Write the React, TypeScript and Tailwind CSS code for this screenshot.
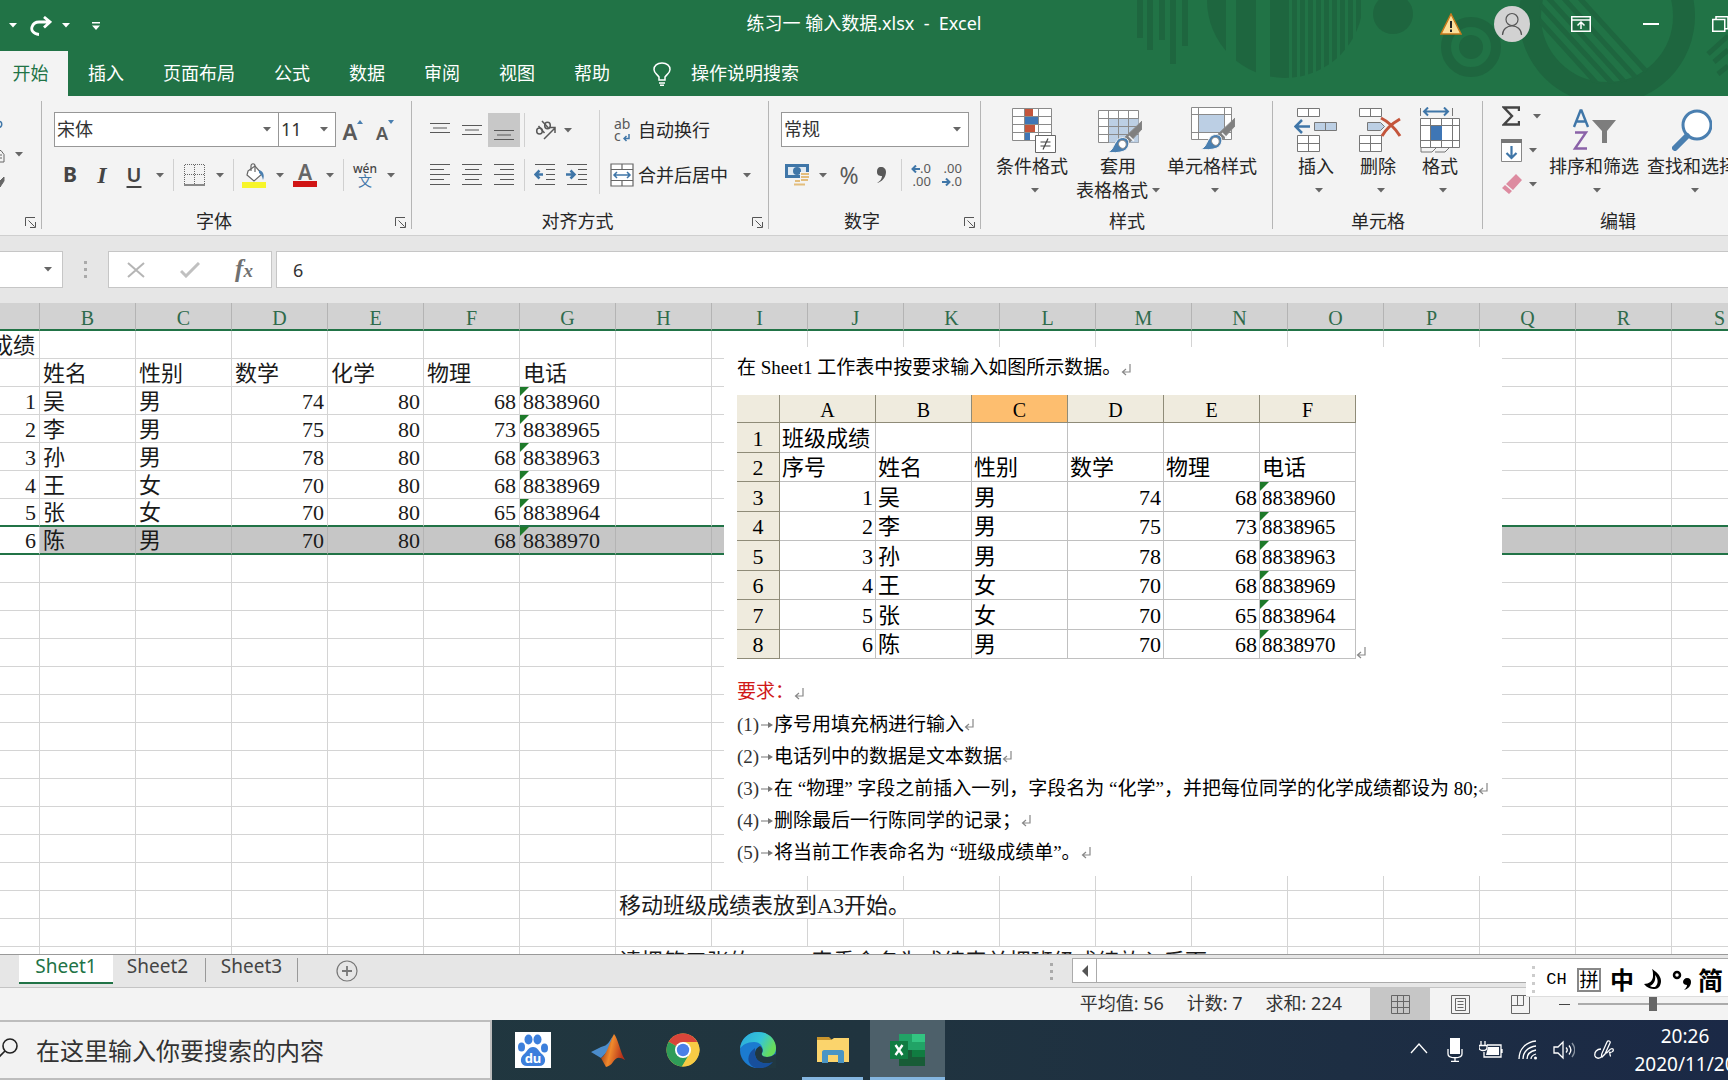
import type { ReactNode } from 'react'

const letters = ['B', 'C', 'D', 'E', 'F', 'G', 'H', 'I', 'J', 'K', 'L', 'M', 'N', 'O', 'P', 'Q', 'R', 'S']
const tabs = ['插入', '页面布局', '公式', '数据', '审阅', '视图', '帮助']

interface Student {
  no: number
  name: string
  sex: string
  math: number
  chem: number
  phys: number
  phone: string
}

const students: Student[] = [
  { no: 1, name: '吴', sex: '男', math: 74, chem: 80, phys: 68, phone: '8838960' },
  { no: 2, name: '李', sex: '男', math: 75, chem: 80, phys: 73, phone: '8838965' },
  { no: 3, name: '孙', sex: '男', math: 78, chem: 80, phys: 68, phone: '8838963' },
  { no: 4, name: '王', sex: '女', math: 70, chem: 80, phys: 68, phone: '8838969' },
  { no: 5, name: '张', sex: '女', math: 70, chem: 80, phys: 65, phone: '8838964' },
  { no: 6, name: '陈', sex: '男', math: 70, chem: 80, phys: 68, phone: '8838970' },
]

const tasks = [
  '序号用填充柄进行输入',
  '电话列中的数据是文本数据',
  '在 “物理” 字段之前插入一列，字段名为 “化学”，并把每位同学的化学成绩都设为 80;',
  '删除最后一行陈同学的记录；',
  '将当前工作表命名为 “班级成绩单”。',
]

/* ---------- small helpers ---------- */

function Caret({ light }: { light?: boolean }) {
  return (
    <svg viewBox="0 0 8 5" className={`h-[5px] w-2 shrink-0 ${light ? 'fill-white' : 'fill-[#666]'}`}>
      <path d="M0 0h8L4 4.5z" />
    </svg>
  )
}

function Btn({ w, label, children, className = '' }: { w: string; label: string; children: ReactNode; className?: string }) {
  return (
    <button aria-label={label} className={`flex h-full shrink-0 items-center justify-center ${w} ${className}`}>
      {children}
    </button>
  )
}

function Sep() {
  return (
    <div className="flex h-full w-2 shrink-0 justify-center">
      <div className="w-px bg-[#d0d0d0]" />
    </div>
  )
}

function Launcher() {
  return (
    <button aria-label="更多设置" className="absolute right-[6px] bottom-[7px] h-[11px] w-[11px]">
      <svg viewBox="0 0 11 11" className="h-[11px] w-[11px]" fill="none" stroke="#555">
        <path d="M.5 9V.5H10M3.5 3.5l6 6M10.5 5v5.500H5" />
      </svg>
    </button>
  )
}

function Group({ w, label, children, launcher }: { w: string; label: string; children?: ReactNode; launcher?: boolean }) {
  return (
    <section className={`relative flex shrink-0 flex-col ${w}`}>
      <div className="h-[112px]">{children}</div>
      <div className={`h-[26px] text-center leading-[26px] ${launcher ? 'pr-[26px]' : ''}`}>{label}</div>
      {launcher && <Launcher />}
      <div className="absolute top-[5px] right-0 h-[128px] w-px bg-[#b5b5b5]" />
    </section>
  )
}

function Combo({ w, label, value }: { w: string; label: string; value: string }) {
  return (
    <div className={`relative h-[35px] shrink-0 ${w}`}>
      <select
        aria-label={label}
        className="h-full w-full appearance-none border border-[#979797] bg-white pl-[2px] text-[18px] text-[#333] outline-none"
      >
        <option>{value}</option>
      </select>
      <div className="pointer-events-none absolute top-[15px] right-2">
        <Caret />
      </div>
    </div>
  )
}

function Lines({ d }: { d: string }) {
  return (
    <svg viewBox="0 0 22 24" className="h-6 w-[22px]" fill="none" stroke="#595959" strokeWidth="1.2">
      <path d={d} />
    </svg>
  )
}

function BigBtn({ w, icon, label, second }: { w: string; icon: ReactNode; label: string; second?: string }) {
  return (
    <button className={`flex shrink-0 flex-col items-center pt-[9px] whitespace-nowrap ${w}`}>
      <span className="flex h-[49px] items-center">{icon}</span>
      <span className="leading-[25px]">{label}</span>
      <span className={`flex h-[22px] items-center gap-1 leading-[22px] ${second ? '' : 'pl-[6px]'}`}>
        {second}
        <Caret />
      </span>
    </button>
  )
}

function Brush() {
  return (
    <>
      <path d="M44 12v8L30 35l-5-5z" fill="#808080" />
      <path d="M31 27l5 5" stroke="#f3f3f3" strokeWidth="1.500" />
      <path d="M18 33c2-5 9-6 12-2 2 4 0 9-4 11-5 2-12 2-16 1 5-2 5-6 8-10z" fill="#4a7fb0" stroke="#f3f3f3" strokeWidth="1" />
      <path d="M22 32c4-2 7 1 6 5-2 3-4 3-6 1-2-2-2-4 0-6z" fill="#fff" />
    </>
  )
}

/* ---------- title bar ---------- */

function HeaderPattern() {
  const thin = [162, 170, 178, 186, 194, 202, 210, 218, 226]
  return (
    <svg viewBox="0 0 598 96" className="absolute top-0 right-0 h-24 w-[598px]" fill="#1e663f">
      <defs>
        <clipPath id="disc">
          <circle cx="155" cy="0" r="78" />
        </clipPath>
        <clipPath id="ring">
          <circle cx="477" cy="16" r="68" />
        </clipPath>
      </defs>
      <path d="M7 0h6v38H7zM17 0h6v50h-6zM29 0h6v40h-6zM40 0h6v64h-6zM52 0h6v46h-6z" />
      <g clipPath="url(#disc)">
        <path d="M77 0h19v90H77zM106 0h20v90h-20zM140 0h19v90h-19z" />
        {thin.map((x) => (
          <rect key={x} x={x} y="0" width="5" height="90" />
        ))}
      </g>
      <circle cx="263" cy="14" r="20" />
      <circle cx="341" cy="47" r="25" fill="none" stroke="#1e663f" strokeWidth="10" />
      <circle cx="341" cy="47" r="12" />
      <circle cx="477" cy="16" r="77" fill="none" stroke="#1e663f" strokeWidth="22" />
      <g clipPath="url(#ring)" stroke="#1e663f" strokeWidth="5">
        <path d="M400 10l100 110M400-6l110 120M400-22l120 132M408-30l120 132M424-30l110 121" />
      </g>
      <path d="M598 36l-20 18M598 50l-14 12M598 66l-10 8" stroke="#1e663f" strokeWidth="5" />
    </svg>
  )
}

function TitleBar() {
  return (
    <div className="relative grid h-[51px] grid-cols-[1fr_auto_1fr] text-white">
      <div className="flex h-[51px] items-center">
        <Btn w="w-[25px]" label="撤消列表">
          <Caret light />
        </Btn>
        <Btn w="w-[32px]" label="恢复">
          <svg viewBox="0 0 22 20" className="h-5 w-[22px]" fill="none" stroke="#fff" strokeWidth="2.800">
            <path d="M9 18.500C3 18 1 14 2 11c1-3 4-5 7-5h10M14 1l6 5-6 5.500" />
          </svg>
        </Btn>
        <Btn w="w-[17px]" label="恢复列表">
          <Caret light />
        </Btn>
        <Btn w="w-[43px]" label="自定义快速访问工具栏">
          <svg viewBox="0 0 8 8" className="h-2 w-2 fill-white">
            <path d="M0 0h8v1.500H0zM0 3.500h8L4 8z" />
          </svg>
        </Btn>
      </div>
      <h1 className="pt-[3px] leading-10 whitespace-pre">练习一 输入数据.xlsx  -  Excel</h1>
      <div className="-mr-[28px] flex h-[47px] items-center justify-end">
        <Btn w="w-[54px]" label="警告">
          <svg viewBox="0 0 22 22" className="h-[22px] w-[22px]">
            <path d="M11 1l10 20H1z" fill="#fbdf9a" stroke="#c77a1c" strokeWidth="1.500" />
            <path d="M11 8v7M11 16.500v2.500" stroke="#222" strokeWidth="2" />
          </svg>
        </Btn>
        <Btn w="w-[68px]" label="帐户">
          <svg viewBox="0 0 36 36" className="h-9 w-9" fill="none" stroke="#555" strokeWidth="1.200">
            <circle cx="18" cy="18" r="18" fill="#d2d2d2" stroke="none" />
            <circle cx="18" cy="13.500" r="6" />
            <path d="M8.500 29c0-12 19-12 19 0" />
          </svg>
        </Btn>
        <Btn w="w-[70px]" label="功能区显示选项">
          <svg viewBox="0 0 20 16" className="h-4 w-5" fill="none" stroke="#fff" strokeWidth="1.500">
            <path d="M.75.75h18.500v14.500H.75zM1 4h18M10 13V6.500M6.500 9.500L10 6l3.500 3.500" />
          </svg>
        </Btn>
        <Btn w="w-[70px]" label="最小化">
          <span className="h-[2px] w-4 bg-white" />
        </Btn>
        <Btn w="w-[70px]" label="还原">
          <svg viewBox="0 0 18 16" className="h-4 w-[18px]" fill="none" stroke="#fff" strokeWidth="1.500">
            <path d="M.75 3.500h12v11.750h-12zM4 3V.75h12v12h-3" />
          </svg>
        </Btn>
      </div>
    </div>
  )
}

function TabBar() {
  return (
    <div className="relative flex h-[45px] items-stretch text-white">
      <button className="w-[68px] bg-[#f3f3f3] pr-[7px] text-[#217346]">开始</button>
      <nav className="flex gap-[39px] pl-5">
        {tabs.map((t) => (
          <button key={t}>{t}</button>
        ))}
      </nav>
      <label className="flex items-center gap-5 pl-[43px]">
        <svg viewBox="0 0 18 24" className="h-6 w-[18px]" fill="none" stroke="#fff" strokeWidth="1.500">
          <path d="M6 18v-3C4 12 1 11 1 7.500 1 4 4 1 9 1s8 3 8 6.500c0 3.500-3 4.500-5 7.500v3zM6 21h6M7 23.250h4" />
        </svg>
        <input className="w-[140px] bg-transparent outline-none placeholder:text-white" placeholder="操作说明搜索" />
      </label>
    </div>
  )
}

/* ---------- ribbon ---------- */

function FontGroup() {
  return (
    <Group w="w-[370px]" label="字体" launcher>
      <div className="flex h-[51px] pt-4 pl-3">
        <Combo w="w-[225px]" label="字体" value="宋体" />
        <Combo w="-ml-px w-[58px]" label="字号" value="11" />
        <Btn w="w-[34px]" label="增大字号">
          <span className="pt-1 text-[22px] font-semibold text-[#595959]">A</span>
          <svg viewBox="0 0 6 4" className="mb-4 h-1 w-[6px] fill-[#4a7fb0]">
            <path d="M0 4l3-4 3 4z" />
          </svg>
        </Btn>
        <Btn w="w-[30px]" label="减小字号">
          <span className="pt-2 text-[18px] font-semibold text-[#595959]">A</span>
          <svg viewBox="0 0 6 4" className="mb-4 h-1 w-[6px] fill-[#4a7fb0]">
            <path d="M0 0l3 4 3-4z" />
          </svg>
        </Btn>
      </div>
      <div className="mt-3 flex h-8 pl-3 text-[#444]">
        <Btn w="w-8" label="加粗">
          <b className="text-[21px]">B</b>
        </Btn>
        <Btn w="w-8" label="倾斜">
          <i className="font-['Liberation_Serif',serif] text-[24px] font-bold">I</i>
        </Btn>
        <Btn w="w-8" label="下划线">
          <span className="text-[20px] font-semibold underline underline-offset-4">U</span>
        </Btn>
        <Btn w="w-[19px]" label="下划线列表">
          <Caret />
        </Btn>
        <Sep />
        <Btn w="w-[34px]" label="边框">
          <svg viewBox="0 0 21 22" className="h-[22px] w-[21px]" fill="none" stroke="#666">
            <path d="M.5 20V.5h20V20M10.500 1v19M1 10.500h19" strokeDasharray="1 1" />
            <path d="M0 21h21" strokeWidth="1.500" />
          </svg>
        </Btn>
        <Btn w="w-[18px]" label="边框列表">
          <Caret />
        </Btn>
        <Sep />
        <Btn w="w-[34px]" label="填充颜色">
          <svg viewBox="0 0 24 25" className="h-[25px] w-6">
            <path d="M6 8l7-5 7 8-8 7-7-6z" fill="#fff" stroke="#666" strokeWidth="1.200" />
            <path d="M9 8V3c0-3 4-3 4 0v6" fill="none" stroke="#666" strokeWidth="1.200" />
            <path d="M17 7c4 1 6 5 4 10-1-4-2-6-4-7z" fill="#4a7fb0" />
            <path d="M0 19h24v6H0z" fill="#f7f52a" />
          </svg>
        </Btn>
        <Btn w="w-[18px]" label="填充颜色列表">
          <Caret />
        </Btn>
        <Btn w="w-8" label="字体颜色">
          <span className="flex flex-col items-center">
            <span className="text-[21px] leading-[18px] font-semibold text-[#666]">A</span>
            <span className="h-[6px] w-6 bg-[#d01414]" />
          </span>
        </Btn>
        <Btn w="w-[18px]" label="字体颜色列表">
          <Caret />
        </Btn>
        <Sep />
        <Btn w="w-[36px]" label="拼音指南">
          <span className="flex flex-col items-center">
            <span className="text-[12px] leading-[11px] font-medium">wén</span>
            <span className="text-[14px] leading-[14px] text-[#3f76a8]">文</span>
          </span>
        </Btn>
        <Btn w="w-4" label="拼音列表">
          <Caret />
        </Btn>
      </div>
    </Group>
  )
}

function AlignGroup() {
  return (
    <Group w="w-[357px]" label="对齐方式" launcher>
      <div className="flex h-full">
        <div className="w-[187px] pt-[17px] pl-3">
          <div className="flex h-[34px]">
            <Btn w="w-8" label="顶端对齐">
              <Lines d="M1 5.500h20M4 10h14M1 14.500h20" />
            </Btn>
            <Btn w="w-8" label="垂直居中">
              <Lines d="M1 7.500h20M4 12h14M1 16.500h20" />
            </Btn>
            <Btn w="w-8" label="底端对齐" className="bg-[#c8c8c8]">
              <Lines d="M1 12.500h20M4 17h14M1 21.500h20" />
            </Btn>
            <Sep />
            <Btn w="w-[36px]" label="方向">
              <svg viewBox="0 0 22 22" className="h-[22px] w-[22px]" fill="none" stroke="#595959" strokeWidth="1.500">
                <ellipse cx="4.500" cy="12" rx="2.800" ry="3" />
                <path d="M3.500 7l6 7M7 2l6.500 7" />
                <ellipse cx="12.500" cy="6.500" rx="2.800" ry="3.200" />
                <path d="M9 20L20 9M20 14V8.500h-5.500" />
              </svg>
            </Btn>
            <Btn w="w-2" label="方向列表">
              <Caret />
            </Btn>
          </div>
          <div className="mt-3 flex h-8">
            <Btn w="w-8" label="左对齐">
              <Lines d="M1 1.500h20M1 6.500h14M1 11.500h20M1 16.500h14M1 21.500h20" />
            </Btn>
            <Btn w="w-8" label="居中">
              <Lines d="M1 1.500h20M4 6.500h14M1 11.500h20M4 16.500h14M1 21.500h20" />
            </Btn>
            <Btn w="w-8" label="右对齐">
              <Lines d="M1 1.500h20M7 6.500h14M1 11.500h20M7 16.500h14M1 21.500h20" />
            </Btn>
            <Sep />
            <Btn w="w-[34px]" label="减少缩进量">
              <svg viewBox="0 0 22 24" className="h-6 w-[22px]" fill="none" stroke="#595959" strokeWidth="1.200">
                <path d="M1 1.500h20M12 6.500h9M12 11.500h9M12 16.500h9M1 21.500h20" />
                <path d="M9 11.500H2M5.500 7.500l-4 4 4 4" stroke="#3f76a8" strokeWidth="2.500" />
              </svg>
            </Btn>
            <Btn w="w-[30px]" label="增加缩进量">
              <svg viewBox="0 0 22 24" className="h-6 w-[22px]" fill="none" stroke="#595959" strokeWidth="1.200">
                <path d="M1 1.500h20M12 6.500h9M12 11.500h9M12 16.500h9M1 21.500h20" />
                <path d="M0 11.500h8M4.500 7.500l4 4-4 4" stroke="#3f76a8" strokeWidth="2.500" />
              </svg>
            </Btn>
          </div>
        </div>
        <div className="mt-[14px] h-[84px] w-px bg-[#d0d0d0]" />
        <div className="pt-[17px] pl-[10px]">
          <button className="flex h-[34px] items-center gap-1">
            <span className="flex w-6 flex-col pl-1 text-left text-[14px] leading-[12px] text-[#595959]">
              <span>ab</span>
              <span className="flex items-center gap-[2px]">
                c
                <svg viewBox="0 0 7 8" className="mt-1 h-2 w-[7px]" fill="none" stroke="#3f76a8" strokeWidth="1.500">
                  <path d="M6 0v4.500H1M3.500 2L1 4.500 3.500 7" />
                </svg>
              </span>
            </span>
            自动换行
          </button>
          <div className="mt-3 flex h-8 items-center">
            <button className="flex items-center gap-1">
              <svg viewBox="0 0 24 24" className="h-6 w-6" fill="none" stroke="#666">
                <path d="M1 1h22v22H1zM1 6.500h22M1 17.500h22M12 1v5M12 18v5" fill="#fff" strokeWidth="1.200" />
                <path d="M4 12h16M7 9l-3 3 3 3M17 9l3 3-3 3" stroke="#3f76a8" strokeWidth="1.500" />
              </svg>
              合并后居中
            </button>
            <Btn w="w-[38px]" label="合并列表">
              <Caret />
            </Btn>
          </div>
        </div>
      </div>
    </Group>
  )
}

function NumberGroup() {
  return (
    <Group w="w-[212px]" label="数字" launcher>
      <div className="pt-4 pl-3">
        <Combo w="w-[188px]" label="数字格式" value="常规" />
        <div className="mt-3 flex h-8 text-[#595959]">
          <Btn w="w-8" label="会计数字格式">
            <svg viewBox="0 0 24 24" className="h-6 w-6">
              <path d="M0 1h24v14H0z" fill="#3f76a8" />
              <path d="M3 4h18v8H3z" fill="#dfe9f2" />
              <circle cx="12" cy="8" r="4" fill="#3f76a8" />
              <path d="M15 9h9v14H9v-7h6z" fill="#f3f3f3" />
              <path d="M16 11h8M16 14h8M16 17h7M10 18h5M9 21.500h11" stroke="#e3bd7c" strokeWidth="2" />
            </svg>
          </Btn>
          <Btn w="w-5" label="会计格式列表">
            <Caret />
          </Btn>
          <Btn w="w-8" label="百分比样式">
            <span className="text-[23px]">%</span>
          </Btn>
          <Btn w="w-8" label="千位分隔样式">
            <svg viewBox="0 0 10 16" className="h-4 w-[10px] fill-[#595959]">
              <path d="M5 0c3 0 5 2 5 5 0 5-4 10-9 11 3-2 5-4 5-7-3 0-5-1-5-4s1-5 4-5z" />
            </svg>
          </Btn>
          <Sep />
          <Btn w="w-8" label="增加小数位数">
            <span className="flex flex-col items-end text-[13px] leading-[13px]">
              <span className="flex items-center">
                <DecimalArrow d="M9 4H2M5 .5L1.500 4 5 7.500" />
                .0
              </span>
              <span>.00</span>
            </span>
          </Btn>
          <Btn w="w-[30px]" label="减少小数位数">
            <span className="flex flex-col items-end text-[13px] leading-[13px]">
              <span>.00</span>
              <span className="flex items-center">
                <DecimalArrow d="M0 4h7M4 .5L7.500 4 4 7.500" />
                .0
              </span>
            </span>
          </Btn>
        </div>
      </div>
    </Group>
  )
}

function DecimalArrow({ d }: { d: string }) {
  return (
    <svg viewBox="0 0 9 8" className="h-2 w-[9px]" fill="none" stroke="#3f76a8" strokeWidth="2">
      <path d={d} />
    </svg>
  )
}

function StylesGroup() {
  return (
    <Group w="w-[292px]" label="样式">
      <div className="flex h-full pl-[9px]">
        <BigBtn
          w="w-[84px]"
          label="条件格式"
          icon={
            <svg viewBox="0 0 44 46" className="ml-1 h-[46px] w-11" fill="none" stroke="#8a8a8a">
              <path d="M.5 1.500h39v32H.5z" fill="#fff" />
              <path d="M.5 9.500h39M.5 17.500h39M.5 25.500h39M12.500 1.500v32M26.500 1.500v32" />
              <path d="M13 2h8v7h-8zM13 18h10v7H13z" fill="#c4553b" stroke="none" />
              <path d="M13 10h13v7H13zM13 26h5v7h-5z" fill="#3f76b5" stroke="none" />
              <path d="M23.500 28.500h20v17h-20z" fill="#fff" stroke="#666" />
              <path d="M28.500 35h10M28.500 39h10M36 31.500l-5 11" stroke="#444" strokeWidth="1.200" />
            </svg>
          }
        />
        <BigBtn
          w="w-[88px]"
          label="套用"
          second="表格格式"
          icon={
            <svg viewBox="0 0 44 44" className="ml-1 mt-[3px] h-11 w-11" fill="none" stroke="#8a8a8a">
              <path d="M.5 1.500h40v32H.5z" fill="#fff" />
              <path d="M11 9.500h29.500v24H11z" fill="#bccfe4" stroke="none" />
              <path d="M.5 9.500h40M.5 17.500h40M.5 25.500h40M10.500 1.500v32M20.500 1.500v32M30.500 1.500v32" />
              <Brush />
            </svg>
          }
        />
        <BigBtn
          w="w-[100px]"
          label="单元格样式"
          icon={
            <svg viewBox="0 0 44 44" className="ml-[2px] mb-[3px] h-11 w-11" fill="none" stroke="#8a8a8a">
              <path d="M.5 1.500h40v32H.5z" fill="#fff" />
              <path d="M8 9h25v17H8z" fill="#bccfe4" stroke="none" />
              <path d="M.5 8.500h40M.5 26.500h40M7.500 1.500v32M33.500 1.500v32" />
              <Brush />
            </svg>
          }
        />
      </div>
    </Group>
  )
}

function CellsGroup() {
  return (
    <Group w="w-[210px]" label="单元格">
      <div className="flex h-full pl-3">
        <BigBtn
          w="w-[62px]"
          label="插入"
          icon={
            <svg viewBox="0 0 44 44" className="h-11 w-11" fill="#fff" stroke="#777">
              <path d="M3.500.5h22v8h-22zM14.500.5v8M3.500 27.500h22v16h-22zM14.500 27.500v16M3.500 35.500h22" />
              <path d="M20.500 14.500h22v8h-22zM31.500 14.500v8" fill="#bccfe4" />
              <path d="M16 18.500H2M8 12l-6.500 6.500L8 25" fill="none" stroke="#3f76a8" strokeWidth="2.500" />
            </svg>
          }
        />
        <BigBtn
          w="w-[62px]"
          label="删除"
          icon={
            <svg viewBox="0 0 44 44" className="ml-[3px] h-11 w-11" fill="#fff" stroke="#777">
              <path d="M1.500.5h22v8h-22zM12.500.5v8M1.500 27.500h22v16h-22zM12.500 27.500v16M1.500 35.500h22" />
              <path d="M9.500 14.500h13l4 4-4 4h-13z" fill="#bccfe4" />
              <path d="M23 10c8 4 14 10 19 18M42 11c-7 4-14 10-18 17" fill="none" stroke="#c4553b" strokeWidth="3" />
            </svg>
          }
        />
        <BigBtn
          w="w-[62px]"
          label="格式"
          icon={
            <svg viewBox="0 0 42 46" className="h-[46px] w-[42px]" fill="#fff" stroke="#777">
              <path d="M1.500 11.500h39v29h-39zM1.500 18.500h39M1.500 33.500h39M11.500 11.500v29M22.500 11.500v29M33.500 11.500v29" />
              <path d="M12 19h11v14H12z" fill="#3f76b5" stroke="none" />
              <path d="M2 41v4h11l4-4M16 45h10l4-4" fill="none" />
              <path d="M1.500 1v8M33.500 1v8" />
              <path d="M5 4.500h24M9 .5l-4 4 4 4M25 .5l4 4-4 4" fill="none" stroke="#3f76a8" strokeWidth="2" />
            </svg>
          }
        />
      </div>
    </Group>
  )
}

function EditGroup() {
  return (
    <Group w="w-[270px]" label="编辑">
      <div className="flex h-full">
        <div className="flex w-[62px] flex-col gap-[2px] pt-1 pl-3">
          <button aria-label="自动求和" className="flex h-8 items-center gap-[13px] pl-[7px]">
            <svg viewBox="0 0 18 20" className="h-5 w-[18px]" fill="none" stroke="#444" strokeWidth="2.400">
              <path d="M17 5V1.500H2L10 10l-8 8.500h15V15" />
            </svg>
            <Caret />
          </button>
          <button aria-label="填充" className="flex h-8 items-center gap-[7px] pl-[6px]">
            <svg viewBox="0 0 21 23" className="h-[23px] w-[21px]">
              <path d="M.5.500h20v22H.5z" fill="#fff" stroke="#888" />
              <path d="M0 0h21v4H0z" fill="#777" />
              <path d="M10.500 7v12M5.500 14l5 5 5-5" fill="none" stroke="#3f76a8" strokeWidth="2.200" />
            </svg>
            <Caret />
          </button>
          <button aria-label="清除" className="flex h-8 items-center gap-[7px] pl-[6px]">
            <svg viewBox="0 0 21 20" className="h-5 w-[21px]" fill="#dd8ba0">
              <path d="M15 0l6 6-9 10-7-6zM4 11l7 6-3 3-7-6z" />
            </svg>
            <Caret />
          </button>
        </div>
        <BigBtn
          w="w-[98px]"
          label="排序和筛选"
          icon={
            <svg viewBox="0 0 44 42" className="h-[42px] w-11" fill="none" strokeWidth="2.400">
              <path d="M2 18L8.500 1.500h1L16 18M4 12.500h10" stroke="#3f76a8" />
              <path d="M3 23.500h11L3 39.500h12" stroke="#8a62a8" />
              <path d="M20 11h24l-9 11v12h-5V22z" fill="#7d7d7d" />
            </svg>
          }
        />
        <BigBtn
          w="w-[98px]"
          label="查找和选择"
          icon={
            <svg viewBox="0 0 40 42" className="h-[42px] w-10" fill="none" stroke="#4a7fb0">
              <circle cx="25" cy="16" r="14" fill="#fff" strokeWidth="3" />
              <path d="M15 27L3 39" strokeWidth="6" strokeLinecap="round" />
            </svg>
          }
        />
      </div>
    </Group>
  )
}

function Ribbon() {
  return (
    <div className="flex h-[140px] border-b border-[#cfcfcf] bg-[#f3f3f3] text-[18px] text-[#262626]">
      <Group w="w-[42px]" label="" launcher>
        <div className="flex h-full flex-col pt-[21px]">
          <svg viewBox="0 0 24 72" className="h-[72px] w-6" fill="none" stroke="#666">
            <path d="M-2 5c5-3 5 7 0 5" stroke="#3f76a8" strokeWidth="1.500" />
            <path d="M-1 33.500h2l3 4V45h-5M-1 38h3M-1 41h3" />
            <path d="M15 35h8l-4 4.500z" fill="#666" stroke="none" />
            <path d="M0 64l4-4v4l-4 6z" fill="#666" />
          </svg>
        </div>
      </Group>
      <FontGroup />
      <AlignGroup />
      <NumberGroup />
      <StylesGroup />
      <CellsGroup />
      <EditGroup />
    </div>
  )
}

/* ---------- formula bar ---------- */

function FormulaBar() {
  return (
    <div className="flex h-[67px] items-center bg-[#e6e6e6]">
      <button aria-label="名称框" className="flex h-[37px] w-[63px] items-center justify-end border border-l-0 border-[#c6c6c6] bg-white pr-[10px]">
        <Caret />
      </button>
      <div className="flex w-[44px] flex-col items-center gap-1">
        <span className="h-[3px] w-[3px] bg-[#aaa]" />
        <span className="h-[3px] w-[3px] bg-[#aaa]" />
        <span className="h-[3px] w-[3px] bg-[#aaa]" />
      </div>
      <div className="ml-px flex h-[37px] w-[164px] border border-[#c6c6c6] bg-white">
        <Btn w="w-[54px]" label="取消">
          <svg viewBox="0 0 18 16" className="h-4 w-[18px]" fill="none" stroke="#b5b5b5" strokeWidth="2">
            <path d="M1 1l16 14M17 1L1 15" />
          </svg>
        </Btn>
        <Btn w="w-[54px]" label="输入">
          <svg viewBox="0 0 20 16" className="h-4 w-5" fill="none" stroke="#c0c0c0" strokeWidth="3">
            <path d="M1 9l5 5L19 1" />
          </svg>
        </Btn>
        <Btn w="w-[54px]" label="插入函数">
          <i className="font-['Liberation_Serif',serif] text-[25px] leading-6 font-bold text-[#707070]">
            f<span className="text-[19px]">x</span>
          </i>
        </Btn>
      </div>
      <input
        aria-label="编辑栏"
        defaultValue="6"
        className="ml-1 h-[37px] min-w-0 flex-1 border border-r-0 border-[#c6c6c6] bg-white pl-4 text-[18px] text-[#333] outline-none"
      />
    </div>
  )
}

/* ---------- grid ---------- */

const cell = 'h-7 border-r border-b border-[#d4d4d4] px-0 pt-[2px] pb-0 whitespace-nowrap'

function Flag() {
  return (
    <svg viewBox="0 0 9 9" className="absolute top-0 left-0 h-[9px] w-[9px] fill-[#1e7a2a]">
      <path d="M0 0h9L0 9z" />
    </svg>
  )
}

function Blank({ n }: { n: number }) {
  return (
    <>
      {Array.from({ length: n }, (_, i) => (
        <td key={i} className={cell} />
      ))}
    </>
  )
}

function StudentRow({ s }: { s: Student }) {
  const selected = s.no === 6
  const line = s.no >= 5 ? 'border-b-2 border-b-[#217346]' : ''
  const td = `h-7 border-r border-b border-[#d4d4d4] px-[3px] pt-[2px] pb-0 ${line}`
  const fill = selected ? 'bg-[#c6c6c6] border-r-[#b4b4b4]' : ''
  return (
    <tr>
      <td className={`${td} text-right`}>{s.no}</td>
      <td className={`${td} ${fill}`}>{s.name}</td>
      <td className={`${td} ${fill}`}>{s.sex}</td>
      <td className={`${td} ${fill} text-right`}>{s.math}</td>
      <td className={`${td} ${fill} text-right`}>{s.chem}</td>
      <td className={`${td} ${fill} text-right`}>{s.phys}</td>
      <td className={`${td} ${fill} relative`}>
        <Flag />
        {s.phone}
      </td>
      {Array.from({ length: 12 }, (_, i) => (
        <td key={i} className={`${td} ${fill}`} />
      ))}
    </tr>
  )
}

function Mark() {
  return (
    <svg viewBox="0 0 10 12" className="inline h-3 w-[10px]" fill="none" stroke="#888" strokeWidth="1.200">
      <path d="M9 0v8H2M5 5L1.500 8 5 11" />
    </svg>
  )
}

function Exercise() {
  const head = 'border-r border-b border-[#8f8b78] bg-[#efebde] px-0 pt-[3px] pb-0 font-normal'
  const td = 'border-r border-b border-[#c0c0c0] px-[2px] pt-[3px] pb-0'
  return (
    <article className="absolute top-[44px] left-[724px] h-[529px] w-[778px] bg-white pt-[5px] pl-[13px] font-['Liberation_Serif','Noto_Sans_CJK_SC',serif] text-[19px] whitespace-nowrap text-black">
      <p className="leading-8">
        在 Sheet1 工作表中按要求输入如图所示数据。
        <Mark />
      </p>
      <div className="mt-[11px] flex items-end">
        <table className="h-[264px] w-[619px] table-fixed border-separate border-spacing-0 text-[22px] leading-6">
          <thead>
            <tr>
              <th className={`${head} h-7 w-[43px]`} />
              {['A', 'B', 'C', 'D', 'E', 'F'].map((c) => (
                <th key={c} className={`h-7 ${head} text-[20px] ${c === 'C' ? 'border-[#1c1c6e] bg-[#fdbe6f]' : ''}`}>
                  {c}
                </th>
              ))}
            </tr>
          </thead>
          <tbody>
            <tr>
              <th className={head}>1</th>
              <td className={td}>班级成绩</td>
              <td className={td} />
              <td className={td} />
              <td className={td} />
              <td className={td} />
              <td className={td} />
            </tr>
            <tr>
              <th className={head}>2</th>
              {['序号', '姓名', '性别', '数学', '物理', '电话'].map((c) => (
                <td key={c} className={td}>
                  {c}
                </td>
              ))}
            </tr>
            {students.map((s) => (
              <tr key={s.no}>
                <th className={head}>{s.no + 2}</th>
                <td className={`${td} text-right`}>{s.no}</td>
                <td className={td}>{s.name}</td>
                <td className={td}>{s.sex}</td>
                <td className={`${td} text-right`}>{s.math}</td>
                <td className={`${td} text-right`}>{s.phys}</td>
                <td className={`${td} relative text-[21px]`}>
                  <Flag />
                  {s.phone}
                </td>
              </tr>
            ))}
          </tbody>
        </table>
        <Mark />
      </div>
      <p className="mt-[17px] leading-8 text-[#d01818]">
        要求：
        <Mark />
      </p>
      <ol className="mt-px leading-8">
        {tasks.map((t, i) => (
          <li key={t} className="flex items-center">
            <span className="w-[23px] text-[#333]">({i + 1})</span>
            <svg viewBox="0 0 14 8" className="h-2 w-[14px]" fill="#777">
              <path d="M1 3.500h7V1l5 3-5 3V4.500H1z" />
            </svg>
            {t}
            <Mark />
          </li>
        ))}
      </ol>
    </article>
  )
}

function Sheet() {
  const head = 'h-7 border-r border-b-2 border-[#b4b4b4] border-b-[#217346] bg-[#d2d2d2] px-0 pt-1 pb-0'
  return (
    <main className="relative min-h-0 flex-1 overflow-hidden bg-white">
      <table className="w-[1768px] table-fixed border-separate border-spacing-0 font-['Liberation_Serif','Noto_Sans_CJK_SC',serif] text-[22px] leading-6 text-[#1a1a1a]">
        <thead>
          <tr>
            <th className={`${head} w-10`} />
            {letters.map((c) => (
              <th key={c} className={`${head} text-[20px] leading-[22px] font-normal text-[#2f6b4c]`}>
                {c}
              </th>
            ))}
          </tr>
        </thead>
        <tbody>
          <tr>
            <td className={cell}>
              <div className="flex justify-end pr-1">班级成绩</div>
            </td>
            <Blank n={18} />
          </tr>
          <tr>
            <td className={cell} />
            {['姓名', '性别', '数学', '化学', '物理', '电话'].map((c) => (
              <td key={c} className="h-7 border-r border-b border-[#d4d4d4] px-[3px] pt-[2px] pb-0">
                {c}
              </td>
            ))}
            <Blank n={12} />
          </tr>
          {students.map((s) => (
            <StudentRow key={s.no} s={s} />
          ))}
          {Array.from({ length: 12 }, (_, i) => (
            <tr key={i}>
              <Blank n={19} />
            </tr>
          ))}
          <tr>
            <Blank n={7} />
            <td colSpan={4} className={cell}>
              <div className="pl-[3px]">移动班级成绩表放到A3开始。</div>
            </td>
            <Blank n={8} />
          </tr>
          <tr>
            <Blank n={19} />
          </tr>
          <tr>
            <Blank n={7} />
            <td colSpan={7} className={cell}>
              <div className="pl-[3px]">请把第三张的Sheet1表重命名为成绩表并把班级成绩放入后面</div>
            </td>
            <Blank n={5} />
          </tr>
        </tbody>
      </table>
      <Exercise />
    </main>
  )
}

/* ---------- bottom bars ---------- */

function SheetTabs() {
  return (
    <div className="flex h-[33px] items-start border-t border-[#999] bg-[#e6e6e6] text-[19px] text-[#444]">
      <button className="ml-[19px] h-[29px] w-[94px] border-b-2 border-[#217346] bg-white pb-1 leading-[23px] text-[#217346]">Sheet1</button>
      <button className="h-[29px] w-[92px] border-b-2 border-transparent pr-[3px] pb-1 leading-[23px]">Sheet2</button>
      <span className="mt-[3px] h-6 w-px bg-[#999]" />
      <button className="h-[29px] w-[91px] border-b-2 border-transparent pb-1 leading-[23px]">Sheet3</button>
      <span className="mt-[3px] h-6 w-px bg-[#999]" />
      <button aria-label="新工作表" className="mt-[5px] ml-[38px]">
        <svg viewBox="0 0 22 22" className="h-[22px] w-[22px]" fill="none" stroke="#777" strokeWidth="1.200">
          <circle cx="11" cy="11" r="10" />
          <path d="M11 6v10M6 11h10" strokeWidth="1.800" />
        </svg>
      </button>
      <div className="ml-auto flex w-[678px] pt-[3px]">
        <div className="flex w-[22px] flex-col gap-1 pt-[5px]">
          <span className="h-[3px] w-[3px] bg-[#aaa]" />
          <span className="h-[3px] w-[3px] bg-[#aaa]" />
          <span className="h-[3px] w-[3px] bg-[#aaa]" />
        </div>
        <button aria-label="向左滚动" className="flex h-[25px] w-[25px] items-center justify-center border border-[#ababab] bg-white">
          <svg viewBox="0 0 6 12" className="h-3 w-[6px] fill-[#555]">
            <path d="M6 0v12L0 6z" />
          </svg>
        </button>
        <div className="h-[25px] flex-1 border-y border-[#ababab] bg-white" />
      </div>
    </div>
  )
}

function StatusBar() {
  return (
    <div className="flex h-[33px] items-center justify-end border-t border-[#c4c4c4] bg-[#f3f3f3] text-[#333]">
      <div className="flex gap-[23px] pr-7 pb-px">
        <span>平均值: 56</span>
        <span>计数: 7</span>
        <span>求和: 224</span>
      </div>
      <Btn w="w-[60px]" label="普通" className="bg-[#c6c6c6]">
        <svg viewBox="0 0 19 19" className="h-[19px] w-[19px]" fill="none" stroke="#666">
          <path d="M.5.500h18v18H.5zM6.500.5v18M12.500.5v18M.5 6.500h18M.5 12.500h18" />
        </svg>
      </Btn>
      <Btn w="w-[60px]" label="页面布局">
        <svg viewBox="0 0 19 19" className="h-[19px] w-[19px]" fill="none" stroke="#666">
          <path d="M.5.500h18v18H.5zM4.500 3.500h10v12h-10zM6.500 6.500h6M6.500 9.500h6M6.500 12.500h6" />
        </svg>
      </Btn>
      <Btn w="w-[60px]" label="分页预览">
        <svg viewBox="0 0 19 19" className="h-[19px] w-[19px]" fill="none" stroke="#666">
          <path d="M.5.500h18v18H.5zM6.500.5v10M12.500.5v10M.5 10.500h12" />
        </svg>
      </Btn>
      <Btn w="w-[28px]" label="缩小">
        <span className="h-px w-[11px] bg-[#444]" />
      </Btn>
      <input
        type="range"
        aria-label="显示比例"
        defaultValue={50}
        className="h-4 w-[150px] appearance-none bg-transparent [&::-webkit-slider-runnable-track]:h-[2px] [&::-webkit-slider-runnable-track]:bg-[#ababab] [&::-webkit-slider-thumb]:-mt-[6px] [&::-webkit-slider-thumb]:h-[14px] [&::-webkit-slider-thumb]:w-2 [&::-webkit-slider-thumb]:appearance-none [&::-webkit-slider-thumb]:bg-[#666]"
      />
    </div>
  )
}

function ImeBar() {
  return (
    <div className="absolute right-0 bottom-[83px] flex h-[38px] w-[202px] items-center border-b border-[#ddd] bg-white pt-1 text-black">
      <div className="flex w-[15px] flex-col items-center gap-[5px]">
        <span className="h-[3px] w-[3px] bg-[#ccc]" />
        <span className="h-[3px] w-[3px] bg-[#ccc]" />
        <span className="h-[3px] w-[3px] bg-[#ccc]" />
        <span className="h-[3px] w-[3px] bg-[#ccc]" />
      </div>
      <span className="w-[31px] text-center font-['Liberation_Mono',monospace] text-[17px]">CH</span>
      <span className="ml-[5px] flex h-6 w-6 items-center justify-center border-2 border-[#888] text-[19px] leading-5">拼</span>
      <span className="ml-[9px] text-[24px] leading-7 font-bold">中</span>
      <svg viewBox="0 0 20 22" className="ml-[9px] h-[22px] w-5">
        <path d="M9 0c3 2 9 6 9 12 0 5-3 8-6 8-4 0-8-1-11-5 5 0 9-3 9-8 0-3 0-5-1-7z" />
        <path d="M12 6c3 3 4 9 0 12-2 0-4 0-5-1 4-2 6-6 5-11z" fill="#fff" />
      </svg>
      <svg viewBox="0 0 20 22" className="ml-[9px] h-[22px] w-5">
        <circle cx="5" cy="6" r="3" fill="none" stroke="#000" strokeWidth="2.500" />
        <path d="M15 9c3 0 4 2 4 4 0 4-3 7-7 8 2-2 3-3 3-5-2 0-4-1-4-3s2-4 4-4z" />
      </svg>
      <span className="ml-[6px] text-[25px] leading-7 font-bold">简</span>
    </div>
  )
}

function TaskIcons() {
  return (
    <div className="flex h-full pl-[3px]">
      <Btn w="w-[75px]" label="百度">
        <svg viewBox="0 0 36 36" className="h-9 w-9">
          <path d="M0 0h36v36H0z" fill="#fff" />
          <g fill="#3c7fdc">
            <ellipse cx="13.500" cy="7.500" rx="4" ry="5" />
            <ellipse cx="22.500" cy="7.500" rx="4" ry="5" />
            <ellipse cx="6.500" cy="15" rx="3.500" ry="4.500" />
            <ellipse cx="29.500" cy="16" rx="3.500" ry="4.500" />
            <path d="M18 15c5 0 6 5 9 7 5 4 4 12-3 12H12c-7 0-8-8-3-12 3-2 4-7 9-7z" />
          </g>
          <text x="18" y="31" fontSize="13" fontWeight="bold" textAnchor="middle" fill="#fff">
            du
          </text>
        </svg>
      </Btn>
      <Btn w="w-[75px]" label="MATLAB">
        <svg viewBox="0 0 36 34" className="h-[34px] w-9">
          <defs>
            <linearGradient id="peak" x1="0" x2="1" y1="0" y2=".3">
              <stop offset="0" stopColor="#7c1d10" />
              <stop offset=".5" stopColor="#f08a2c" />
              <stop offset="1" stopColor="#b5301a" />
            </linearGradient>
          </defs>
          <path d="M1 19l10-5 3-1c4-1 6-6 9-10l-5 15-7 7z" fill="#4b8ccb" />
          <path d="M11 25c6-3 8-15 13-24 4 4 6 18 11 26-7-4-9-2-12 2-2 3-4 4-7 5z" fill="url(#peak)" />
        </svg>
      </Btn>
      <Btn w="w-[75px]" label="Chrome">
        <svg viewBox="0 0 34 34" className="h-[34px] w-[34px]">
          <circle cx="17" cy="17" r="16.500" fill="#f7cb45" />
          <path d="M17 17L2.700 8.700A16.500 16.500 0 0 1 31.300 9H17z" fill="#d9453a" />
          <path d="M17 17L2.700 8.700A16.500 16.500 0 0 0 16 33.500L23.500 21z" fill="#2f9c58" />
          <path d="M31.300 9H17v8l6.500 4L16 33.500A16.500 16.500 0 0 0 31.300 9z" fill="#f7cb45" />
          <circle cx="17" cy="17" r="8" fill="#fff" />
          <circle cx="17" cy="17" r="6.200" fill="#4a80e8" />
        </svg>
      </Btn>
      <Btn w="w-[75px]" label="Edge">
        <svg viewBox="0 0 36 36" className="h-9 w-9">
          <defs>
            <linearGradient id="wave" x1="0" x2="1" y1="0" y2=".4">
              <stop offset="0" stopColor="#2aa7dc" />
              <stop offset=".6" stopColor="#35c5d8" />
              <stop offset="1" stopColor="#67dd5c" />
            </linearGradient>
          </defs>
          <circle cx="18" cy="18" r="18" fill="#1b7bd0" />
          <path d="M0 17C1 6 9 0 18 0c11 0 18 8 18 16 0 6-4 9-9 9-4 0-6-2-5-4 2-2 1-11-8-11C7 10 2 13 0 17z" fill="url(#wave)" />
          <path d="M22 21c-1 2 1 4 5 4 3 0 6-1 8-3l1 1v13H22c5 0 9-3 11-6-8 4-18 0-18-8 0-5 3-7 5-8 3 2 3 5 2 7z" fill="#213841" />
          <path d="M15 20c-1 8 7 14 18 10-4 5-10 7-17 6C6 33 6 22 15 16z" fill="#174f9c" />
        </svg>
      </Btn>
      <Btn w="w-[75px]" label="文件资源管理器" className="relative">
        <svg viewBox="0 0 32 28" className="h-7 w-8">
          <path d="M0 1h12l3 3H0z" fill="#c9952d" />
          <path d="M0 4h14l3-2h15v24H0z" fill="#fbd46c" />
          <path d="M5 27V16c0-1 1-2 2-2h18c1 0 2 1 2 2v11h-6v-8H11v8z" fill="#4a95c4" />
        </svg>
        <span className="absolute bottom-0 h-[3px] w-[61px] bg-[#84b6e0]" />
      </Btn>
      <Btn w="w-[75px]" label="Excel" className="relative bg-[#4d606a]">
        <svg viewBox="0 0 36 34" className="h-[34px] w-9">
          <path d="M9 1h13v16H9z" fill="#21a366" />
          <path d="M22 1h13v8H22z" fill="#33c481" />
          <path d="M22 9h13v8H22z" fill="#21a366" />
          <path d="M9 17h26v16H9z" fill="#185c37" />
          <path d="M22 17h13v7H22z" fill="#107c41" />
          <path d="M0 8h18v18H0z" fill="#107c41" />
          <path d="M5.500 12l7 10M12.500 12l-7 10" stroke="#fff" strokeWidth="2.400" />
        </svg>
        <span className="absolute bottom-0 h-[3px] w-full bg-[#84b6e0]" />
      </Btn>
    </div>
  )
}

function Tray() {
  const svg = { fill: 'none', stroke: '#fff', strokeWidth: 1.3 }
  return (
    <div className="ml-auto -mr-[10px] flex h-full text-white">
      <Btn w="w-9" label="显示隐藏的图标">
        <svg viewBox="0 0 18 12" className="mb-1 h-3 w-[18px]" {...svg}>
          <path d="M1 11l8-9 8 9" />
        </svg>
      </Btn>
      <Btn w="w-9" label="麦克风">
        <svg viewBox="0 0 16 24" className="h-6 w-4" {...svg}>
          <path d="M3 0h10v16H3z" fill="#fff" stroke="none" />
          <path d="M1 11v5c0 5 14 5 14 0v-5M8 20v3M4 23.300h8" />
        </svg>
      </Btn>
      <Btn w="w-9" label="电池">
        <svg viewBox="0 0 24 18" className="h-[18px] w-6" {...svg}>
          <path d="M8 4h14v12H5v-5M23 8v4" />
          <path d="M9 6h11v8H7z" fill="#fff" stroke="none" />
          <path d="M2 0v4M6 0v4M0 4.500h8v2c0 4-8 4-8 0z" />
        </svg>
      </Btn>
      <Btn w="w-[37px]" label="网络">
        <svg viewBox="0 0 20 20" className="h-5 w-5" {...svg}>
          <path d="M1 19C1 9 8 2 18 1M5 19c0-7 5-12 13-13M9 19c0-5 4-8 9-9M13 19c0-3 2-4 5-5" />
          <circle cx="17.500" cy="18" r="1.500" fill="#fff" stroke="none" />
        </svg>
      </Btn>
      <Btn w="w-[36px]" label="音量">
        <svg viewBox="0 0 22 20" className="h-5 w-[22px]" {...svg}>
          <path d="M1 7h4l5-5v16l-5-5H1zM13 7.500c1.500 1.500 1.500 3.500 0 5M16 5.500c2.500 3 2.500 6 0 9" />
          <path d="M19 3c3.500 4.500 3.500 9.500 0 14" stroke="#8892a0" />
        </svg>
      </Btn>
      <Btn w="w-[43px]" label="Windows Ink 工作区">
        <svg viewBox="0 0 20 20" className="h-5 w-5" {...svg}>
          <path d="M7 9c-4 0-7 3-6 7 1 3 5 3 7 0M8 17c-1-1 0-4 1-6l4-9c1-2 4-1 3 1l-5 11zM12 13c2 0 4-6 7-4 1 2-1 4-4 3 2 1 0 4 2 4" />
        </svg>
      </Btn>
      <time className="ml-[7px] w-[106px] shrink-0 pt-[2px] text-center text-[19px] leading-7">
        20:26
        <br />
        2020/11/20
      </time>
    </div>
  )
}

function Taskbar() {
  return (
    <footer className="flex h-[60px] bg-linear-to-r from-[#213a40] via-[#20343f] to-[#1b2946]">
      <label className="flex w-[492px] shrink-0 items-center border-2 border-l-0 border-[#bdbdbd] bg-[#f2f2f2]">
        <svg viewBox="0 0 18 20" className="mb-1 h-5 w-[18px]" fill="none" stroke="#222" strokeWidth="1.600">
          <circle cx="10" cy="8" r="7" />
          <path d="M5 13l-6 6" />
        </svg>
        <input
          className="ml-[18px] w-[400px] bg-transparent pt-[2px] text-[24px] outline-none placeholder:text-[#333]"
          placeholder="在这里输入你要搜索的内容"
        />
      </label>
      <TaskIcons />
      <Tray />
    </footer>
  )
}

export default function App() {
  return (
    <div className="relative flex h-screen w-full flex-col overflow-hidden bg-white font-['Noto_Sans','Noto_Sans_CJK_SC',sans-serif] text-[18px]">
      <header className="relative bg-[#217346]">
        <HeaderPattern />
        <TitleBar />
        <TabBar />
      </header>
      <Ribbon />
      <FormulaBar />
      <Sheet />
      <SheetTabs />
      <StatusBar />
      <Taskbar />
      <ImeBar />
    </div>
  )
}
